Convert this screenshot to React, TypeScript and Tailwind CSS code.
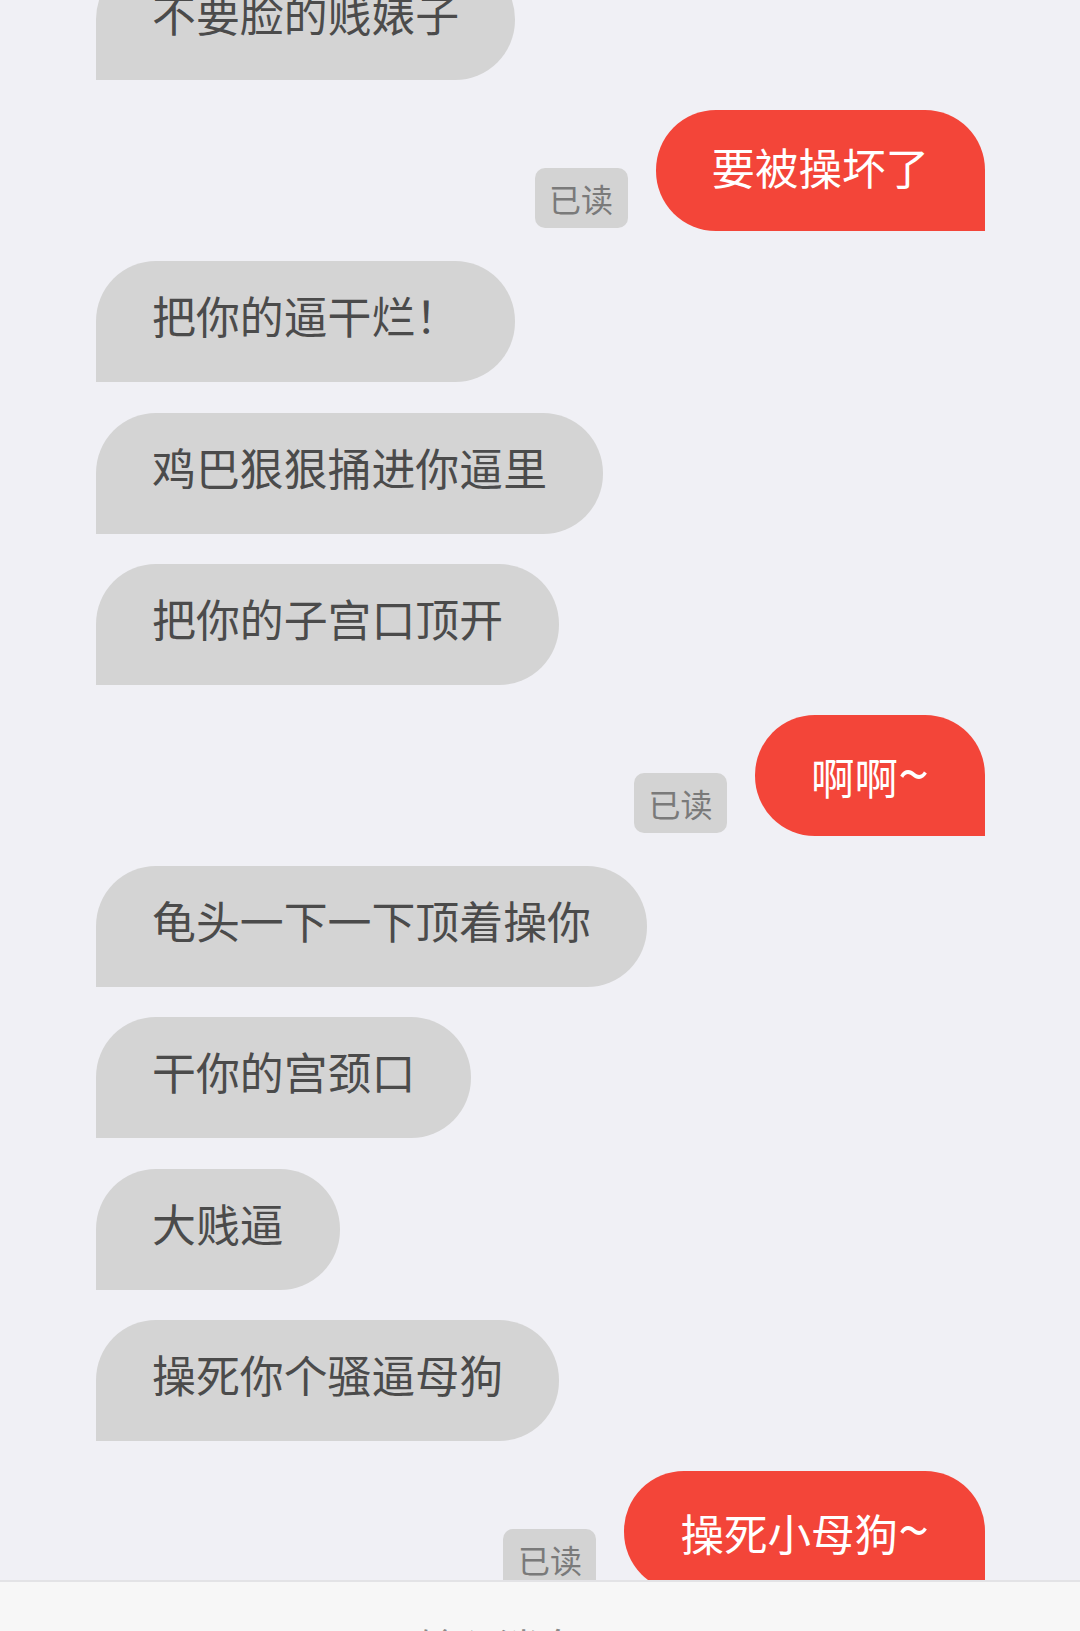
import React from 'react';

type Message = { id: number; from: 'them' | 'me'; text: string; read?: boolean };

const MESSAGES: Message[] = [
  { id: 1, from: 'them', text: '不要脸的贱婊子' },
  { id: 2, from: 'me', text: '要被操坏了', read: true },
  { id: 3, from: 'them', text: '把你的逼干烂！' },
  { id: 4, from: 'them', text: '鸡巴狠狠捅进你逼里' },
  { id: 5, from: 'them', text: '把你的子宫口顶开' },
  { id: 6, from: 'me', text: '啊啊~', read: true },
  { id: 7, from: 'them', text: '龟头一下一下顶着操你' },
  { id: 8, from: 'them', text: '干你的宫颈口' },
  { id: 9, from: 'them', text: '大贱逼' },
  { id: 10, from: 'them', text: '操死你个骚逼母狗' },
  { id: 11, from: 'me', text: '操死小母狗~', read: true },
];

const FONT = "font-['Noto_Sans_CJK_SC','Noto_Sans',sans-serif]";

// the tilde in the reference is drawn noticeably larger than the CJK glyphs
function BubbleText({ text }: { text: string }) {
  if (!text.endsWith('~')) return <>{text}</>;
  return (
    <>
      {text.slice(0, -1)}
      <span className="text-[56px] leading-none">~</span>
    </>
  );
}

function Bubble({ message }: { message: Message }) {
  if (message.from === 'them') {
    return (
      <div className="flex h-[121px] shrink-0 items-center self-start rounded-tl-[60px] rounded-tr-[60px] rounded-br-[60px] rounded-bl-none bg-[#d4d4d4] px-[56px] pb-[11px] text-[43.9px] leading-none whitespace-nowrap text-[#4b4b4b]">
        {message.text}
      </div>
    );
  }

  return (
    <div className="flex shrink-0 items-end gap-[28px] self-end">
      {message.read && (
        <span className="mb-[3px] flex h-[60px] w-[93px] items-center justify-center rounded-[10px] bg-[#d3d3d3] text-[32px] leading-none text-[#7a7a7a]">
          已读
        </span>
      )}
      <div className="flex h-[121px] items-center rounded-tl-[60px] rounded-tr-[60px] rounded-bl-[60px] rounded-br-none bg-[#f34539] px-[56px] pb-[8px] text-[43.5px] leading-none whitespace-nowrap text-white">
        <span className="leading-none">
          <BubbleText text={message.text} />
        </span>
      </div>
    </div>
  );
}

export default function App() {
  return (
    <div className={`${FONT} flex h-[1631px] w-[1080px] flex-col overflow-hidden bg-[#f0f0f5]`}>
      <div className="flex-1 overflow-hidden pr-[95px] pl-[96px]">
        <div className="mt-[-41px] flex flex-col gap-[30.2px]">
          {MESSAGES.map((message) => (
            <Bubble key={message.id} message={message} />
          ))}
        </div>
      </div>

      <div className="h-[51px] shrink-0 overflow-hidden border-t-2 border-[#e3e3e6] bg-[#f7f7f7]">
        <p className="mt-[44px] pl-[418px] text-[40px] leading-none text-[#8a8a8a]">输入消息</p>
      </div>
    </div>
  );
}
